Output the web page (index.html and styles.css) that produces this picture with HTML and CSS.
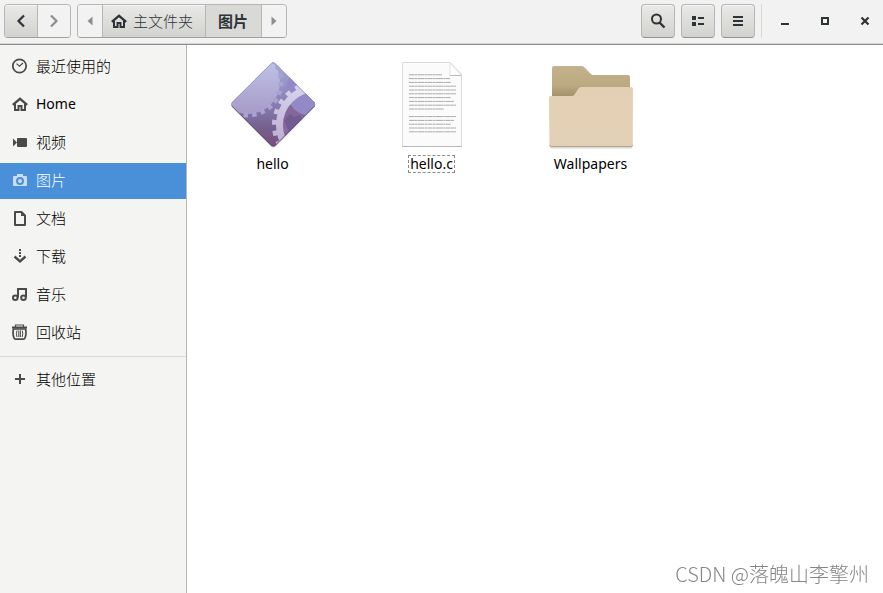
FILE: index.html
```html
<!DOCTYPE html>
<html lang="zh-CN">
<head>
<meta charset="utf-8">
<title>图片</title>
<link rel="stylesheet" href="styles.css">
</head>
<body>
<svg class="defs" aria-hidden="true">
  <symbol id="home" viewBox="0 0 16 16">
    <path d="M.8 8.800 8 2.800l7.200 6" fill="none" stroke="currentColor" stroke-width="2.200"/>
    <path d="M3 7.500V14h3.500v-4h3v4H13V7.500" fill="none" stroke="currentColor" stroke-width="2"/>
  </symbol>
</svg>
<header class="headerbar">
  <div class="group">
    <button class="btn square" aria-label="后退"><svg class="icon" viewBox="0 0 16 16"><path d="M11 2.500 5.500 8l5.500 5.500" fill="none" stroke="currentColor" stroke-width="2.200"/></svg></button>
    <button class="btn square flat" aria-label="前进"><svg class="icon" viewBox="0 0 16 16"><path d="m5 2.500 5.500 5.500L5 13.500" fill="none" stroke="currentColor" stroke-width="2.200"/></svg></button>
  </div>
  <nav class="group" aria-label="路径">
    <button class="btn arrow flat" aria-label="向左滚动"><svg class="icon" viewBox="0 0 16 16"><path d="M10.500 3.500v9L5.500 8z" fill="currentColor"/></svg></button>
    <button class="btn crumb"><svg class="icon"><use href="#home"/></svg>主文件夹</button>
    <button class="btn crumb current">图片</button>
    <button class="btn arrow flat" aria-label="向右滚动"><svg class="icon" viewBox="0 0 16 16"><path d="M5.500 3.500v9l5-4.500z" fill="currentColor"/></svg></button>
  </nav>
  <div class="tools">
    <button class="btn solo" aria-label="搜索"><svg class="icon" viewBox="0 0 16 16"><circle cx="6.500" cy="6" r="4.500" fill="none" stroke="currentColor" stroke-width="2"/><path d="m9.500 9.500 5 5" stroke="currentColor" stroke-width="2.400"/></svg></button>
    <button class="btn solo" aria-label="列表视图"><svg class="icon" viewBox="0 0 16 16"><path d="M2 3h4v4H2zM2 9h4v4H2zM8 4h6v2H8zM8 10h6v2H8z" fill="currentColor"/></svg></button>
    <button class="btn solo" aria-label="菜单"><svg class="icon" viewBox="0 0 16 16"><path d="M3 3h10v2H3zM3 7h10v2H3zM3 11h10v2H3z" fill="currentColor"/></svg></button>
  </div>
  <div class="window-controls">
    <button class="control" aria-label="最小化"><svg class="icon" viewBox="0 0 16 16"><path d="M4 10h8v2H4z" fill="currentColor"/></svg></button>
    <button class="control" aria-label="最大化"><svg class="icon" viewBox="0 0 16 16"><path d="M5 5h6v6H5z" fill="none" stroke="currentColor" stroke-width="2"/></svg></button>
    <button class="control" aria-label="关闭"><svg class="icon" viewBox="0 0 16 16"><path d="m4.500 4.500 7 7m0-7-7 7" stroke="currentColor" stroke-width="2.200"/></svg></button>
  </div>
</header>
<div class="body">
  <nav class="sidebar" aria-label="位置">
    <a class="place" href="#"><svg class="icon" viewBox="0 0 16 16"><circle cx="7.500" cy="8" r="6.700" fill="none" stroke="currentColor" stroke-width="1.700"/><path d="M4.500 5.600 7.500 8.200 11 5" fill="none" stroke="currentColor" stroke-width="1.200"/></svg>最近使用的</a>
    <a class="place latin" href="#"><svg class="icon"><use href="#home"/></svg>Home</a>
    <a class="place" href="#"><svg class="icon" viewBox="0 0 16 16"><path d="M1 4.500 5 8.500l-4 4z" fill="currentColor"/><rect x="5" y="4" width="10" height="9" rx="1" fill="currentColor"/></svg>视频</a>
    <a class="place selected" href="#" aria-current="page"><svg class="icon" viewBox="0 0 16 16"><path fill-rule="evenodd" d="M5 2h6v2h3q1 0 1 1v8q0 1-1 1H2q-1 0-1-1V5q0-1 1-1h3zM8 5a4 4 0 1 0 0 8 4 4 0 0 0 0-8zm0 2a2 2 0 1 1 0 4 2 2 0 0 1 0-4z" fill="currentColor"/></svg>图片</a>
    <a class="place" href="#"><svg class="icon" viewBox="0 0 16 16"><path d="M3 2h6.500L13 5.500V15H3z" fill="none" stroke="currentColor" stroke-width="2" stroke-linejoin="round"/><path d="M9 2v4h4z" fill="currentColor"/></svg>文档</a>
    <a class="place" href="#"><svg class="icon" viewBox="0 0 16 16"><path d="M7 1h2v2H7zM7 4h2v2H7zM7 7h2v2H7z" fill="currentColor"/><path d="M2.500 8.500 8 13.300l5.500-4.800" fill="none" stroke="currentColor" stroke-width="2.400"/></svg>下载</a>
    <a class="place" href="#"><svg class="icon" viewBox="0 0 16 16"><g fill="none" stroke="currentColor" stroke-width="2"><circle cx="3.300" cy="11.700" r="2.300"/><circle cx="11.500" cy="11.700" r="2.300"/><path d="M6 11.500V3h8v8.500"/></g></svg>音乐</a>
    <a class="place" href="#"><svg class="icon" viewBox="0 0 16 16"><g fill="none" stroke="currentColor"><path d="M3.500 3V1h8v2" stroke-width="1.200"/><path d="M0 3.500h15" stroke-width="2"/><path d="M1.400 5q-1 5 .6 9 .5 1.200 2 1.200h7q1.500 0 2-1.200 1.600-4 .6-9z" stroke-width="1.700"/><path d="M5 6.500q-1.200 3 0 6.500M6.800 6.500V13M8.400 6.500V13M10.200 6.500q1.200 3 0 6.500" stroke-width="1"/></g></svg>回收站</a>
    <hr class="divider">
    <a class="place" href="#"><svg class="icon" viewBox="0 0 16 16"><path d="M3 7h4V3h2v4h4v2H9v4H7V9H3z" fill="currentColor"/></svg>其他位置</a>
  </nav>
  <main class="files">
    <figure class="file">
      <svg class="thumb" viewBox="0 0 90 90" aria-hidden="true">
        <defs>
          <linearGradient id="back" x1="0" y1="0" x2="0" y2="1"><stop offset="0" stop-color="#a9add9"/><stop offset=".45" stop-color="#8983b8"/><stop offset=".75" stop-color="#75608f"/><stop offset="1" stop-color="#764b7d"/></linearGradient>
          <linearGradient id="gear" x1="0" y1="0" x2="0" y2="1"><stop offset="0" stop-color="#c3cbee"/><stop offset="1" stop-color="#a79ac8"/></linearGradient>
          <linearGradient id="ring" x1="0" y1="0" x2="0" y2="1"><stop offset="0" stop-color="#d6d3ec"/><stop offset="1" stop-color="#b59ec6"/></linearGradient>
          <clipPath id="diamond"><path id="outline" d="M43 3.500q2.300-2.400 4.600 0L86.200 42q2 2.300 0 4.600L47.600 85.500q-2.300 2-4.600 0L4.200 46.600q-2-2.300 0-4.600z"/></clipPath>
        </defs>
        <use href="#outline" y="1" fill="#000" opacity=".25"/>
        <g clip-path="url(#diamond)">
          <path d="M0 0h90v90H0z" fill="url(#back)"/>
          <circle cx="88" cy="65" r="33" fill="#84689c"/>
          <circle cx="84" cy="30" r="26" fill="#9389c6"/>
          <path d="m56 60 6-6 4 3 6-2 2 5 6 2-16 16z" fill="#735a90"/>
          <path d="m54 78 18-16 16-6v30H54z" fill="#875c9a" opacity=".7"/>
          <circle cx="20" cy="22" r="32" fill="url(#gear)"/>
          <circle cx="20" cy="22" r="33" fill="none" stroke="#aaa3d1" stroke-width="5" stroke-dasharray="4.320 4.320"/>
          <circle cx="88" cy="65" r="36.500" fill="none" stroke="url(#ring)" stroke-width="7"/>
          <circle cx="88" cy="65" r="41.500" fill="none" stroke="url(#ring)" stroke-width="5" stroke-dasharray="5 5.860"/>
        </g>
        <path d="M4 46 43 85q2.300 2 4.600 0L86.500 46" fill="none" stroke="#58406b" opacity=".6"/>
        <path d="M4 43 43 4q2.300-2 4.600 0L86.500 43" fill="none" stroke="#8f91b5" opacity=".6"/>
      </svg>
      <figcaption class="name">hello</figcaption>
    </figure>
    <figure class="file">
      <svg class="thumb" viewBox="0 0 90 90" aria-hidden="true">
        <path d="M16 3h47l12 12v72H15V4z" fill="#000" opacity=".12"/>
        <path d="M15.500 2.500H63L74.500 14v72.500h-59z" fill="#fbfbfb" stroke="#dadada"/>
        <path d="M15 86.500h60" stroke="#b8b8b8"/>
        <path d="M63 3v12.500h11.500z" fill="#fff" stroke="#e2e2e2"/>
        <path d="M63 15.500h11.500" stroke="#bbb"/>
        <g stroke="#aaa" stroke-width="1" stroke-dasharray="5 .3 3 .3 7 .4 2 .3">
          <path d="M22 14.800h33M22 18.600h41M22 22.400h42M22 26.200h47M22 30h47M22 33.800h47M22 37.600h42M22 41.400h45M22 45.200h47M22 49h35M22 56.600h47M22 60.400h45M22 64.200h42M22 68h47M22 71.800h47"/>
        </g>
      </svg>
      <figcaption class="name focused">hello.c</figcaption>
    </figure>
    <figure class="file">
      <svg class="thumb" viewBox="0 0 90 90" aria-hidden="true">
        <defs>
          <linearGradient id="rear" x1="0" y1="0" x2="0" y2="1"><stop offset="0" stop-color="#c4b28c"/><stop offset=".6" stop-color="#bba981"/><stop offset="1" stop-color="#a08e6b"/></linearGradient>
          <linearGradient id="front" x1="0" y1="0" x2="0" y2="1"><stop offset="0" stop-color="#e3cfb4"/><stop offset="1" stop-color="#e2d0b6"/></linearGradient>
        </defs>
        <path d="M4 40h82.500v47q0 1.500-1.500 1.500H5.500Q4 88.500 4 87z" fill="#000" opacity=".16"/>
        <path d="M6 38V8q0-2 2-2h27q2 0 3 1l7 7q1 1 2 1h35q2 0 2 2v21z" fill="url(#rear)"/>
        <path d="M3 37.500q0-1.500 1.500-1.500h21q2 0 3-1.500l4-6Q33.500 27 35.500 27H85q2 0 2 2l-.5 56q0 2-2 2h-79q-2 0-2-2z" fill="url(#front)"/>
        <path d="M3.500 85q0 1.500 2 1.500h79q2 0 2-1.500" fill="none" stroke="#b9a78c"/>
      </svg>
      <figcaption class="name">Wallpapers</figcaption>
    </figure>
  </main>
</div>
<div class="watermark">CSDN @落魄山李擎州</div>
</body>
</html>
```
FILE: styles.css
```css
* {
  box-sizing: border-box;
}

body {
  display: flex;
  flex-direction: column;
  min-height: 100vh;
  margin: 0;
  background: #fff;
  color: #000;
  font: 14px/20px "Noto Sans", "Noto Sans CJK SC", sans-serif;
}

.defs {
  position: absolute;
  width: 0;
  height: 0;
}

.icon {
  flex: none;
  width: 16px;
  height: 16px;
}

.headerbar {
  display: flex;
  align-items: flex-start;
  padding: 4px 0 6px 4px;
  background: #f2f2f2;
  border-bottom: 1px solid #8e8f8c;
  box-shadow: inset 0 -1px #d6d6d4;
}

.group {
  display: flex;
  margin-right: 6px;
  border: 1px solid #b6b6b2;
  border-bottom-color: #a0a09c;
  border-radius: 4px;
  overflow: hidden;
}

.btn {
  display: flex;
  align-items: center;
  justify-content: center;
  gap: 6px;
  height: 32px;
  padding: 0;
  border: 0;
  background: linear-gradient(#e9e9e7, #d2d2cf);
  box-shadow: inset 0 1px #f5f5f4;
  color: #2e3436;
  font: 300 15px/20px "Noto Sans CJK SC", sans-serif;
}

.btn + .btn {
  border-left: 1px solid #b6b6b2;
}

.square {
  width: 33px;
}

.square:first-child {
  width: 32px;
}

.arrow {
  width: 25px;
}

.arrow:first-child {
  width: 24px;
}

.btn.flat {
  background: #f2f2f2;
  color: #8b8e8f;
}

.crumb {
  padding: 0 12px 0 8px;
}

.btn.current {
  padding: 0 13px 0 12px;
  background: #d9d9d7;
  box-shadow: none;
  font-weight: 700;
}

.tools {
  display: flex;
  gap: 6px;
  margin-left: auto;
}

.tools .solo {
  width: 34px;
  height: 34px;
  border: 1px solid #b6b6b2;
  border-bottom-color: #92928e;
  border-radius: 4px;
}

.window-controls {
  display: flex;
  margin-left: 6px;
  padding-left: 3px;
  border-left: 1px solid #d8d8d6;
}

.control {
  display: flex;
  align-items: center;
  justify-content: center;
  width: 40px;
  height: 34px;
  padding: 0;
  border: 0;
  background: none;
  color: #2e3436;
}

.window-controls .control:last-child {
  margin-right: -2px;
}

.body {
  display: flex;
  flex: 1;
}

.sidebar {
  display: flex;
  flex: none;
  flex-direction: column;
  gap: 2px;
  width: 187px;
  padding-top: 4px;
  background: #f4f4f2;
  border-right: 1px solid #b6b6b3;
}

.place {
  display: flex;
  align-items: center;
  gap: 8px;
  height: 36px;
  padding: 0 12px 2px;
  color: #000;
  font: 300 15px/20px "Noto Sans CJK SC", sans-serif;
  text-decoration: none;
}

.place.latin {
  font: 400 14px/20px "Noto Sans", sans-serif;
}

.place .icon {
  color: #4a4a48;
}

.selected {
  background: #4a90d9;
  color: #fff;
}

.selected .icon {
  color: #c9def4;
}

.divider {
  width: 100%;
  margin: 3px 0;
  border: 0;
  border-top: 1px solid #d9d9d7;
}

.files {
  display: grid;
  flex: 1;
  grid-template-columns: repeat(auto-fill, 159px);
  align-content: start;
  padding: 15px 6px;
}

.file {
  display: flex;
  flex-direction: column;
  align-items: center;
  gap: 5px;
  margin: 0;
}

.thumb {
  width: 90px;
  height: 90px;
}

.name {
  padding: 0 1px;
  border: 1px solid transparent;
  line-height: 16px;
}

.focused {
  border: 1px dashed #8a8a8a;
}

.watermark {
  position: fixed;
  right: 14px;
  bottom: 4px;
  color: #858585;
  font: 300 20px/30px "Noto Sans CJK SC", sans-serif;
}
```
